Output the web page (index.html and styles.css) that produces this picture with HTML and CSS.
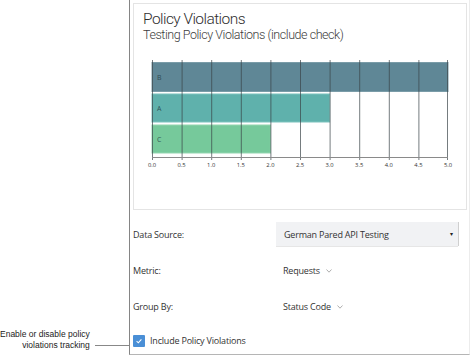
FILE: index.html
```html
<!DOCTYPE html>
<html>
<head>
<meta charset="utf-8">
<link rel="stylesheet" href="styles.css">
</head>
<body>
<div class="page">
  <div class="annot">
    <div class="annot-text">Enable or disable policy<br>violations tracking</div>
    <div class="annot-line"></div>
  </div>
  <div class="panel">
    <div class="card">
      <div class="title">Policy Violations</div>
      <div class="subtitle">Testing Policy Violations (include check)</div>
      <svg class="chart" width="332" height="120" viewBox="0 0 332 120">
        <rect x="18" y="9.5" width="296" height="29" fill="#5f8796" stroke="#7a9ca8" stroke-width="1"/>
        <rect x="18" y="41" width="177.6" height="28" fill="#5fb1ac" stroke="#7cc2bd" stroke-width="1"/>
        <rect x="18" y="72" width="118.4" height="28" fill="#76c99b" stroke="#93d6b0" stroke-width="1"/>
        <g class="grid" stroke="#3b4548" stroke-opacity="0.7" stroke-width="1">
          <line x1="18.5" y1="7" x2="18.5" y2="107"/>
          <line x1="48.1" y1="7" x2="48.1" y2="107"/>
          <line x1="77.7" y1="7" x2="77.7" y2="107"/>
          <line x1="107.3" y1="7" x2="107.3" y2="107"/>
          <line x1="136.9" y1="7" x2="136.9" y2="107"/>
          <line x1="166.5" y1="7" x2="166.5" y2="107"/>
          <line x1="196.1" y1="7" x2="196.1" y2="107"/>
          <line x1="225.7" y1="7" x2="225.7" y2="107"/>
          <line x1="255.3" y1="7" x2="255.3" y2="107"/>
          <line x1="284.9" y1="7" x2="284.9" y2="107"/>
          <line x1="313.5" y1="7" x2="313.5" y2="107"/>
        </g>
        <line x1="18" y1="104.5" x2="314" y2="104.5" stroke="#8a8a8a" stroke-width="1"/>
        <g class="barlabels" font-size="7" fill="#1f3a40" fill-opacity="0.8">
          <text x="23" y="27">B</text>
          <text x="23" y="58">A</text>
          <text x="23" y="89">C</text>
        </g>
        <g class="ticks" font-size="5.8" fill="#333" text-anchor="middle">
          <text x="18" y="114">0.0</text>
          <text x="47.6" y="114">0.5</text>
          <text x="77.2" y="114">1.0</text>
          <text x="106.8" y="114">1.5</text>
          <text x="136.4" y="114">2.0</text>
          <text x="166" y="114">2.5</text>
          <text x="195.6" y="114">3.0</text>
          <text x="225.2" y="114">3.5</text>
          <text x="254.8" y="114">4.0</text>
          <text x="284.4" y="114">4.5</text>
          <text x="314" y="114">5.0</text>
        </g>
      </svg>
    </div>
    <div class="form">
      <div class="label">Data Source:</div>
      <div class="select">
        <span>German Pared API Testing</span>
        <span class="caret">&#9662;</span>
      </div>
      <div class="label">Metric:</div>
      <div class="value">Requests
        <svg class="chev" width="6" height="4" viewBox="0 0 6 4"><path d="M0.5 0.5 L3 3.2 L5.5 0.5" fill="none" stroke="#999" stroke-width="0.8"/></svg>
      </div>
      <div class="label">Group By:</div>
      <div class="value">Status Code
        <svg class="chev" width="6" height="4" viewBox="0 0 6 4"><path d="M0.5 0.5 L3 3.2 L5.5 0.5" fill="none" stroke="#999" stroke-width="0.8"/></svg>
      </div>
      <div class="check-row">
        <span class="checkbox">
          <svg width="12" height="12" viewBox="0 0 12 12"><path d="M3.6 6.2 L5.3 7.8 L8.4 4.3" fill="none" stroke="#fff" stroke-width="1.1"/></svg>
        </span>
        <span class="check-label">Include Policy Violations</span>
      </div>
    </div>
  </div>
</div>
</body>
</html>
```

FILE: styles.css
```css
* { box-sizing: border-box; }
html, body { margin: 0; padding: 0; background: #fff; }
body {
  width: 474px;
  height: 357px;
  overflow: hidden;
  font-family: "Open Sans", "Noto Sans", sans-serif;
  color: #333;
}
.page {
  display: flex;
  align-items: flex-end;
  height: 355px;
}
.annot {
  width: 129px;
  display: flex;
  align-items: flex-end;
  padding-bottom: 4px;
}
.annot-text {
  font-family: "Liberation Sans", Arial, sans-serif;
  font-size: 8.5px;
  line-height: 11px;
  text-align: right;
  color: #222;
  flex: 1;
  white-space: nowrap;
}
.annot-line {
  width: 35px;
  height: 1px;
  background: #888;
  margin-left: 5px;
  margin-bottom: 5px;
}
.panel {
  width: 341px;
  height: 355px;
  border-left: 1px solid #858585;
  border-right: 1px solid #ececec;
  border-bottom: 1px solid #b5b5b5;
  padding: 3px 2px 0 3px;
  display: flex;
  flex-direction: column;
}
.card {
  height: 213px;
  border: 1px solid #e4e4e4;
  padding: 7px 0 0 9px;
  display: flex;
  flex-direction: column;
}
.title {
  font-family: Roboto, "Noto Sans", sans-serif;
  font-weight: 300;
  font-size: 15.5px;
  line-height: 16px;
  letter-spacing: -0.55px;
  color: #2e2e2e;
}
.subtitle {
  font-family: Roboto, "Noto Sans", sans-serif;
  font-weight: 300;
  font-size: 12.5px;
  line-height: 14px;
  letter-spacing: -0.45px;
  color: #3c3c3c;
  margin-top: 1px;
}
.chart {
  display: block;
  margin-left: -9px;
  margin-top: 11px;
  font-family: "Open Sans", sans-serif;
}
.form {
  margin-top: 12px;
  display: grid;
  grid-template-columns: 143px 182px;
  grid-auto-rows: 24px;
  row-gap: 12px;
  font-size: 9px;
  letter-spacing: -0.2px;
}
.label {
  display: flex;
  align-items: center;
  color: #333;
}
.select {
  background: #f1f2f4;
  box-shadow: 1px 0 0 #cfcfcf, 0 1px 0 #e6e6e6;
  display: flex;
  align-items: center;
  justify-content: space-between;
  padding: 0 5px 0 8px;
  color: #333;
}
.caret {
  font-size: 5.5px;
  color: #222;
}
.value {
  display: flex;
  align-items: center;
  padding-left: 7px;
  gap: 6px;
}
.chev { display: block; margin-top: 1px; }
.check-row {
  grid-column: 1 / span 2;
  height: 18px;
  display: flex;
  align-items: flex-end;
  padding-bottom: 1px;
  gap: 5px;
}
.checkbox {
  width: 12px;
  height: 12px;
  background: #4a8fd6;
  border-radius: 1px;
  display: block;
}
.checkbox svg { display: block; }
.check-label {
  line-height: 12px;
  color: #333;
}
```
